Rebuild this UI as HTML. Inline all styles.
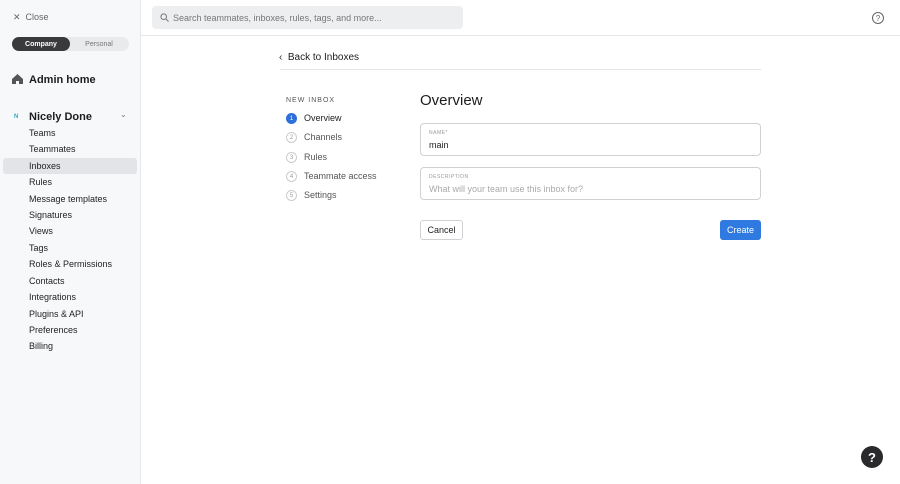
<!DOCTYPE html>
<html><head><style>
*{box-sizing:border-box;margin:0;padding:0}
body{width:900px;height:484px;overflow:hidden;font-family:"Liberation Sans",sans-serif;background:#fff;position:relative;color:#1d1d1f}
.side{position:absolute;left:0;top:0;width:141px;height:484px;background:#f7f8fa;border-right:1px solid #e6e7ea}
.abs{position:absolute}
.nav{position:absolute;left:3px;width:134px;height:16px;font-size:9px;line-height:17px;padding-left:26px;color:#222;border-radius:3px}
.top{position:absolute;left:141px;top:0;right:0;height:36px;border-bottom:1px solid #e6e7ea}
.step{position:absolute;left:286px;font-size:9px;color:#555;height:11px}
.step i{position:absolute;left:0;top:0;width:11px;height:11px;border:1px solid #ccc;border-radius:50%;font-style:normal;font-size:6px;display:flex;align-items:center;justify-content:center;color:#999}
.step span{position:absolute;left:18px;top:0;white-space:nowrap;line-height:11px}
.field{position:absolute;left:420px;width:341px;border:1px solid #cfd1d5;border-radius:4px}
.tg{display:flex;align-items:center;justify-content:center}
</style></head><body>
<div class="side">
<div class="abs" style="left:13px;top:12px;font-size:9px;color:#666">✕&nbsp; Close</div>
<div class="abs" style="left:12px;top:37px;width:117px;height:14px;background:#e9eaec;border-radius:7px"></div>
<div class="abs tg" style="left:12px;top:37px;width:58px;height:14px;background:#3a3a3c;border-radius:7px;color:#fff;font-size:7px;font-weight:bold">Company</div>
<div class="abs tg" style="left:70px;top:37px;width:58px;height:14px;color:#777;font-size:7px">Personal</div>
<svg class="abs" style="left:12px;top:74px" width="11" height="10" viewBox="0 0 11 10"><path d="M5.5 0L0 5v5h4V7h3v3h4V5z" fill="#555"/></svg>
<div class="abs" style="left:29px;top:74px;font-size:11px;font-weight:bold">Admin home</div>
<div class="abs" style="left:14px;top:114px;font-size:6px;color:#3ab;font-weight:bold">N</div>
<div class="abs" style="left:29px;top:111px;font-size:11px;font-weight:bold">Nicely Done</div>
<div class="abs" style="left:120px;top:110px;font-size:8px;color:#777">⌄</div>
<div class="nav" style="top:125px">Teams</div>
<div class="nav" style="top:141px">Teammates</div>
<div class="nav" style="top:158px;background:#e2e4e8">Inboxes</div>
<div class="nav" style="top:174px">Rules</div>
<div class="nav" style="top:191px">Message templates</div>
<div class="nav" style="top:207px">Signatures</div>
<div class="nav" style="top:223px">Views</div>
<div class="nav" style="top:240px">Tags</div>
<div class="nav" style="top:256px">Roles &amp; Permissions</div>
<div class="nav" style="top:273px">Contacts</div>
<div class="nav" style="top:289px">Integrations</div>
<div class="nav" style="top:306px">Plugins &amp; API</div>
<div class="nav" style="top:322px">Preferences</div>
<div class="nav" style="top:338px">Billing</div>
</div>
<div class="top">
<div class="abs" style="left:11px;top:6px;width:311px;height:23px;background:#eceef0;border-radius:4px;font-size:9px;color:#777;line-height:24px;padding-left:21px">Search teammates, inboxes, rules, tags, and more...</div>
<svg class="abs" style="left:19px;top:13px" width="9" height="9" viewBox="0 0 9 9"><circle cx="3.7" cy="3.7" r="2.8" fill="none" stroke="#777"/><path d="M6 6l2.5 2.5" stroke="#777"/></svg>
<div class="abs tg" style="left:731px;top:12px;width:12px;height:12px;border:1px solid #666;border-radius:50%;font-size:8px;color:#666">?</div>
</div>
<div class="abs" style="left:279px;top:52px;font-size:10px">‹&nbsp; Back to Inboxes</div>
<div class="abs" style="left:280px;top:69px;width:481px;height:1px;background:#e3e4e7"></div>
<div class="abs" style="left:286px;top:97px;font-size:7px;color:#555;letter-spacing:1px">NEW INBOX</div>
<div class="step" style="top:113px"><i style="background:#2f6fdc;border-color:#2f6fdc;color:#fff">1</i><span style="color:#222">Overview</span></div>
<div class="step" style="top:132px"><i>2</i><span>Channels</span></div>
<div class="step" style="top:152px"><i>3</i><span>Rules</span></div>
<div class="step" style="top:171px"><i>4</i><span>Teammate access</span></div>
<div class="step" style="top:190px"><i>5</i><span>Settings</span></div>
<div class="abs" style="left:420px;top:92px;font-size:15px">Overview</div>
<div class="field" style="top:123px;height:33px"><div class="abs" style="left:8px;top:6px;font-size:5px;color:#999;letter-spacing:.5px">NAME*</div><div class="abs" style="left:8px;top:16px;font-size:9px">main</div></div>
<div class="field" style="top:167px;height:33px"><div class="abs" style="left:8px;top:6px;font-size:5px;color:#999;letter-spacing:.5px">DESCRIPTION</div><div class="abs" style="left:8px;top:16px;font-size:9px;color:#aaa">What will your team use this inbox for?</div></div>
<div class="abs tg" style="left:420px;top:220px;width:43px;height:20px;border:1px solid #cfd1d5;border-radius:3px;font-size:9px">Cancel</div>
<div class="abs tg" style="left:720px;top:220px;width:41px;height:20px;background:#2f7ae0;border-radius:3px;font-size:9px;color:#fff">Create</div>
<div class="abs tg" style="left:861px;top:446px;width:22px;height:22px;background:#2a2a2c;border-radius:50%;color:#fff;font-size:13px;font-weight:bold">?</div>
</body></html>
